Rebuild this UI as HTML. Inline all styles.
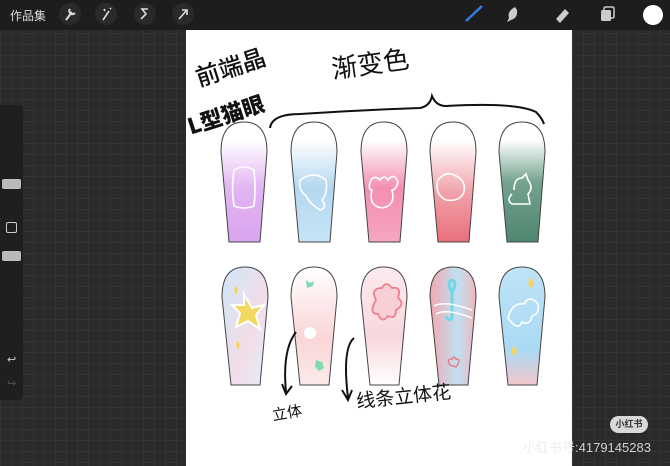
<!DOCTYPE html>
<html><head><meta charset="utf-8"><style>
*{margin:0;padding:0;box-sizing:border-box}
body{width:670px;height:466px;overflow:hidden;background:#2a2a2a;font-family:"Liberation Sans","Noto Sans CJK SC",sans-serif;position:relative;
background-image:linear-gradient(#333 1px,transparent 1px),linear-gradient(90deg,#333 1px,transparent 1px);background-size:11px 11px}
.top{position:absolute;left:0;top:0;width:670px;height:30px;background:#1d1d1d}
.canvas{position:absolute;left:186px;top:30px;width:386px;height:436px;background:#fff}
.side{position:absolute;left:0;top:105px;width:23px;height:295px;background:#1f1f1f;border-radius:0 4px 4px 0}
.hw{position:absolute;color:#111;font-family:"Noto Sans CJK SC",sans-serif;white-space:nowrap}
</style></head><body>
<div class="top">
 <div style="position:absolute;left:10px;top:7px;color:#ddd;font-size:12px">作品集</div>
 <svg width="670" height="30" style="position:absolute;left:0;top:0">
  <circle cx="70" cy="14" r="11" fill="#2a2a2a"/><circle cx="106" cy="14" r="11" fill="#2a2a2a"/><circle cx="145" cy="14" r="11" fill="#2a2a2a"/><circle cx="183" cy="14" r="11" fill="#2a2a2a"/>
  <path d="M66 20 L72 12 M70 9 a3 3 0 1 0 5 4" stroke="#ddd" stroke-width="2" fill="none"/>
  <path d="M103 20 L109 11 M104 9 l1 2 M110 8 l1 1" stroke="#ddd" stroke-width="1.6" fill="none"/>
  <path d="M148 9 L142 9 L146 14 L141 19" stroke="#ddd" stroke-width="1.6" fill="none"/>
  <path d="M179 19 L187 10 M182 10 L187 10 L187 15" stroke="#ddd" stroke-width="1.6" fill="none"/>
  <path d="M466 21 L482 6" stroke="#2f7de0" stroke-width="2.5"/>
  <path d="M515 7 q-8 4 -6 11 l-2 4 l4 -2 q7 -2 6 -10z" fill="#ccc"/>
  <path d="M556 19 l9 -10 l4 4 l-9 10z" fill="#ccc"/>
  <rect x="601" y="10" width="10" height="11" rx="1.5" fill="#ccc"/><rect x="604" y="7" width="10" height="11" rx="1.5" fill="none" stroke="#ccc" stroke-width="1.5"/>
  <circle cx="653" cy="15" r="10" fill="#fff"/>
 </svg>
</div>
<div class="side">
 <div style="position:absolute;left:2px;top:74px;width:19px;height:10px;background:#bbb;border-radius:2px"></div>
 <div style="position:absolute;left:6px;top:117px;width:11px;height:11px;border:1.5px solid #ccc;border-radius:2px"></div>
 <div style="position:absolute;left:2px;top:146px;width:19px;height:10px;background:#bbb;border-radius:2px"></div>
 <div style="position:absolute;left:7px;top:248px;color:#ccc;font-size:11px">↩</div>
 <div style="position:absolute;left:7px;top:272px;color:#555;font-size:11px">↪</div>
</div>
<div class="canvas">
<svg width="386" height="436" style="position:absolute;left:0;top:0">
<defs>
 <linearGradient id="g1" x1="0" y1="0" x2="0" y2="1"><stop offset=".15" stop-color="#fff"/><stop offset=".55" stop-color="#e2b5f2"/><stop offset="1" stop-color="#d8a4ee"/></linearGradient>
 <linearGradient id="g2" x1="0" y1="0" x2="0" y2="1"><stop offset=".15" stop-color="#fff"/><stop offset=".55" stop-color="#b4d7f0"/><stop offset="1" stop-color="#c6e4f6"/></linearGradient>
 <linearGradient id="g3" x1="0" y1="0" x2="0" y2="1"><stop offset=".15" stop-color="#fff"/><stop offset=".55" stop-color="#f38fb0"/><stop offset="1" stop-color="#f6a6c0"/></linearGradient>
 <linearGradient id="g4" x1="0" y1="0" x2="0" y2="1"><stop offset=".15" stop-color="#fff"/><stop offset=".6" stop-color="#f0a0a8"/><stop offset="1" stop-color="#e8707c"/></linearGradient>
 <linearGradient id="g5" x1="0" y1="0" x2="0" y2="1"><stop offset=".15" stop-color="#fff"/><stop offset=".5" stop-color="#74a38f"/><stop offset="1" stop-color="#4f8670"/></linearGradient>
 <linearGradient id="b1" x1="0" y1="0" x2="1" y2="1"><stop offset="0" stop-color="#cfe6f8"/><stop offset=".6" stop-color="#f2dde8"/><stop offset="1" stop-color="#e3effa"/></linearGradient>
 <linearGradient id="b2" x1="0" y1="0" x2="0" y2="1"><stop offset="0" stop-color="#fff"/><stop offset=".6" stop-color="#fad6d8"/><stop offset="1" stop-color="#fbeaea"/></linearGradient>
 <linearGradient id="b3" x1="0" y1="0" x2="0" y2="1"><stop offset="0" stop-color="#fbeaee"/><stop offset=".6" stop-color="#f8d8dc"/><stop offset="1" stop-color="#fff"/></linearGradient>
 <linearGradient id="b4" x1="0" y1="0" x2="1" y2="0"><stop offset="0" stop-color="#f3a9b0"/><stop offset=".6" stop-color="#bfe1f2"/><stop offset="1" stop-color="#f0b6bc"/></linearGradient>
 <linearGradient id="b5" x1="0" y1="0" x2="0" y2="1"><stop offset="0" stop-color="#bfe3f6"/><stop offset=".7" stop-color="#a9daf4"/><stop offset="1" stop-color="#f4c6cc"/></linearGradient>
</defs>
<g stroke="#444" stroke-width="1">
 <path d="M35 122 Q35 92 58 92 Q81 92 81 122 L74 212 L43 212 Z" fill="url(#g1)"/>
 <path d="M105 122 Q105 92 128 92 Q151 92 151 122 L144 212 L113 212 Z" fill="url(#g2)"/>
 <path d="M175 122 Q175 92 198 92 Q221 92 221 122 L214 212 L183 212 Z" fill="url(#g3)"/>
 <path d="M244 122 Q244 92 267 92 Q290 92 290 122 L283 212 L252 212 Z" fill="url(#g4)"/>
 <path d="M313 122 Q313 92 336 92 Q359 92 359 122 L352 212 L321 212 Z" fill="url(#g5)"/>
 <path d="M36 267 Q36 237 59 237 Q82 237 82 267 L74 355 L45 355 Z" fill="url(#b1)"/>
 <path d="M105 267 Q105 237 128 237 Q151 237 151 267 L143 355 L114 355 Z" fill="url(#b2)"/>
 <path d="M175 267 Q175 237 198 237 Q221 237 221 267 L213 355 L184 355 Z" fill="url(#b3)"/>
 <path d="M244 267 Q244 237 267 237 Q290 237 290 267 L282 355 L253 355 Z" fill="url(#b4)"/>
 <path d="M313 267 Q313 237 336 237 Q359 237 359 267 L351 355 L322 355 Z" fill="url(#b5)"/>
</g>
<g stroke="#fff" stroke-width="1.6" fill="none">
 <path d="M48 140 q10 -6 20 0 q2 20 0 36 q-10 4 -20 0 q-3 -18 0 -36z"/>
 <path d="M114 150 q14 -10 26 0 q2 14 -4 20 q6 8 -2 10 q-10 -6 -14 -14 q-8 -6 -6 -16z"/>
 <path d="M184 152 q4 -8 10 -2 q4 -6 8 0 q6 -8 10 2 q-2 8 -6 8 q4 16 -10 18 q-14 -2 -10 -18 q-4 0 -2 -8z"/>
 <path d="M252 150 q8 -10 18 -4 q10 4 8 16 q-4 10 -18 8 q-12 -6 -8 -20z"/>
 <path d="M328 160 q0 -12 8 -12 l4 -4 l2 6 q6 8 0 14 l2 10 l-18 0 q-6 -4 0 -10"/>
</g>
<path d="M58 264 l8 14 l12 -3 l-8 10 l4 14 l-12 -8 l-12 6 l4 -14 l-8 -8 l12 0z" fill="#f3d860" stroke="#fff" stroke-width="2"/>
<path d="M120 250 l4 3 l4 -2 l-1 5 l-6 2z" fill="#7ddcae"/><path d="M130 330 l6 2 l2 6 l-5 3 l-4 -4z" fill="#7ddcae"/>
<circle cx="124" cy="303" r="6" fill="#fff"/>
<path d="M190 270 q-6 -12 6 -12 q4 -8 10 0 q10 -2 6 10 q8 6 -2 12 q0 10 -8 6 q-6 8 -10 -2 q-10 0 -2 -14z" fill="#f7cfd4" stroke="#ee7f8e" stroke-width="1.8"/>
<path d="M266 262 q-6 -10 0 -12 q6 2 0 12 l0 26 q-4 4 -6 -2" stroke="#6fd8e6" stroke-width="3" fill="none"/>
<path d="M248 276 q10 -6 38 4 M250 284 q10 -6 36 4" stroke="#fff" stroke-width="1.5" fill="none"/>
<path d="M264 335 q-4 -6 2 -6 q2 -4 4 0 q6 0 0 8z" fill="none" stroke="#ec7c8a" stroke-width="1.5"/>
<path d="M322 288 q4 -16 16 -14 q6 -10 14 0 q2 10 -6 12 q-2 10 -10 6 q-4 10 -14 -4z" stroke="#fff" stroke-width="1.6" fill="none"/>
<path d="M345 247 l3 6 l-3 6 l-3 -6z M328 315 l3 6 l-3 6 l-3 -6z M52 310 l2 5 l-2 5 l-2 -5z M50 255 l2 5 l-2 5 l-2 -5z" fill="#f4d564"/>
<g stroke="#111" stroke-width="2" fill="none">
 <path d="M84 98 q2 -14 30 -14 q60 -4 120 -6 q10 -2 12 -12 q4 10 14 10 q70 -4 90 6 q6 6 8 12"/>
 <path d="M110 302 q-14 18 -10 60 M96 354 l4 10 l6 -8"/>
 <path d="M168 308 q-12 10 -6 60 M156 360 l6 10 l4 -10"/>
</g>
</svg>
<div class="hw" style="left:8px;top:18px;font-size:24px;transform:rotate(-18deg);font-weight:500">前端晶</div>
<div class="hw" style="left:0px;top:68px;font-size:22px;transform:rotate(-18deg);font-weight:900">L型猫眼</div>
<div class="hw" style="left:145px;top:14px;font-size:26px;transform:rotate(-8deg)">渐变色</div>
<div class="hw" style="left:86px;top:372px;font-size:15px;transform:rotate(-10deg)">立体</div>
<div class="hw" style="left:170px;top:352px;font-size:19px;transform:rotate(-6deg)">线条立体花</div>
</div>
<div style="position:absolute;left:610px;top:416px;width:38px;height:17px;background:#d8d8d8;border-radius:9px;font-size:9px;font-weight:bold;color:#333;text-align:center;line-height:17px">小红书</div>
<div style="position:absolute;left:523px;top:437px;font-size:13px;color:#d0d0d0"><span style="color:#eee">小红书号</span>:4179145283</div>
</body></html>
